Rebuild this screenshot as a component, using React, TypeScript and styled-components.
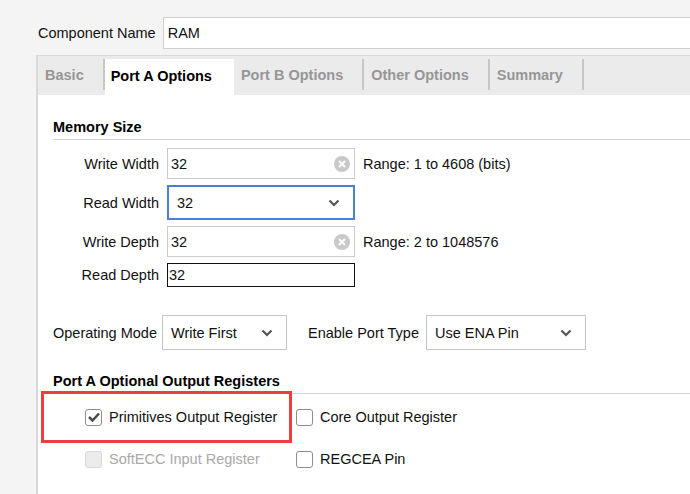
import React from "react";
import styled, { createGlobalStyle, css } from "styled-components";

const GlobalStyle = createGlobalStyle`
  html, body {
    margin: 0;
    padding: 0;
    height: 100%;
    overflow: hidden;
    background: #f4f4f4;
    font-family: "Liberation Sans", Arial, sans-serif;
    font-size: 14.5px;
    color: #111;
  }
  #root {
    height: 100%;
  }
`;

const StyledPage = styled.div`
  display: flex;
  flex-direction: column;
  height: 100%;
`;

const StyledNameRow = styled.div`
  display: flex;
  align-items: center;
  gap: 7px;
  padding: 17px 0 0 38px;
`;

const StyledNameInput = styled.div`
  flex: 1;
  height: 30px;
  line-height: 30px;
  padding-left: 4px;
  background: #fff;
  border: 1px solid #cfcfcf;
  border-right: none;
`;

const StyledPanel = styled.div`
  flex: 1;
  display: flex;
  flex-direction: column;
  margin: 6px 0 0 36px;
  border-left: 2px solid #d9d9d9;
  border-top: 1px solid #d9d9d9;
  background: #fff;
`;

const StyledTabBar = styled.div`
  display: flex;
  align-items: flex-start;
  padding-top: 3px;
  height: 36px;
  background: #ebebeb;
`;

const StyledTab = styled.div<{ $active?: boolean; $sep?: boolean }>`
  height: 31px;
  line-height: 33px;
  padding: 0 19px 0 7px;
  font-weight: bold;
  color: #969696;
  white-space: nowrap;

  ${({ $sep }) =>
    $sep &&
    css`
      border-right: 2px solid #c6c6c6;
    `}

  ${({ $active }) =>
    $active &&
    css`
      height: 36px;
      line-height: 35px;
      padding: 0 22px 0 6px;
      background: #fff;
      color: #000;
    `}
`;

const StyledContent = styled.div`
  padding: 24px 0 0 15px;
`;

const StyledSectionTitle = styled.div<{ $top?: number }>`
  margin-top: ${({ $top }) => $top ?? 0}px;
  padding-bottom: 3px;
  line-height: 17px;
  font-weight: bold;
  color: #000;
  border-bottom: 1px solid #d4d4d4;
`;

const StyledSizeGrid = styled.div`
  display: grid;
  grid-template-columns: 106px 188px auto;
  column-gap: 8px;
  row-gap: 6px;
  align-items: center;
  margin-top: 8px;
`;

const StyledLabel = styled.div`
  text-align: right;
  white-space: nowrap;
`;

const StyledField = styled.div<{ $variant?: "clear" | "focus" | "plain" }>`
  box-sizing: border-box;
  display: flex;
  align-items: center;
  justify-content: space-between;
  height: 31px;
  padding: 0 4px 0 3px;
  background: #fff;
  border: 1px solid #cccccc;

  ${({ $variant }) =>
    $variant === "focus" &&
    css`
      height: 35px;
      padding: 0 13px 0 8px;
      border: 2px solid #4b7fd5;
    `}

  ${({ $variant }) =>
    $variant === "plain" &&
    css`
      height: 24px;
      padding: 0 1px;
      border: 1px solid #111;
    `}
`;

const StyledRange = styled.div`
  white-space: nowrap;
`;

const StyledModeRow = styled.div`
  display: flex;
  align-items: center;
  margin-top: 28px;
`;

const StyledSelect = styled.div<{ $width: number; $gap: number }>`
  box-sizing: border-box;
  display: flex;
  align-items: center;
  justify-content: space-between;
  width: ${({ $width }) => $width}px;
  height: 35px;
  padding: 0 13px 0 8px;
  margin: 0 21px 0 ${({ $gap }) => $gap}px;
  background: #fff;
  border: 1px solid #c6c6c6;
  white-space: nowrap;
`;

const StyledModeLabel = styled.div`
  white-space: nowrap;
`;

const StyledCheckGrid = styled.div`
  position: relative;
  display: grid;
  grid-template-columns: 211px auto;
  grid-auto-rows: 42px;
  align-items: center;
  padding: 2px 0 0 32px;
`;

const StyledCheckItem = styled.div<{ $disabled?: boolean }>`
  display: flex;
  align-items: center;
  gap: 7px;
  white-space: nowrap;
  color: ${({ $disabled }) => ($disabled ? "#a9a9a9" : "#111")};
`;

const StyledBox = styled.span<{ $disabled?: boolean }>`
  box-sizing: border-box;
  display: flex;
  align-items: center;
  justify-content: center;
  width: 17px;
  height: 17px;
  border: 1.5px solid #8e8e8e;
  border-radius: 3px;
  background: #fff;

  ${({ $disabled }) =>
    $disabled &&
    css`
      border-color: #d8d8d8;
      background: #ececec;
    `}
`;

const StyledHighlight = styled.div`
  position: absolute;
  left: -12px;
  top: -3px;
  width: 245px;
  height: 46px;
  border: 3px solid #ef3c3c;
  pointer-events: none;
`;

const Chevron = () => (
  <svg width="12" height="8" viewBox="0 0 12 8">
    <polyline
      points="1.5,1.5 6,6 10.5,1.5"
      fill="none"
      stroke="#555"
      strokeWidth="2.2"
    />
  </svg>
);

const ClearIcon = () => (
  <svg width="16" height="16" viewBox="0 0 16 16">
    <circle cx="8" cy="8" r="8" fill="#c9c9c9" />
    <path d="M5 5 L11 11 M11 5 L5 11" stroke="#fff" strokeWidth="2" />
  </svg>
);

const Check = () => (
  <svg width="12" height="10" viewBox="0 0 12 10">
    <polyline
      points="1,5 4.5,8.5 11,1.5"
      fill="none"
      stroke="#4a4a4a"
      strokeWidth="2.5"
    />
  </svg>
);

const CheckOption = ({
  label,
  checked,
  disabled
}: {
  label: string;
  checked?: boolean;
  disabled?: boolean;
}) => (
  <StyledCheckItem $disabled={disabled}>
    <StyledBox $disabled={disabled}>{checked && <Check />}</StyledBox>
    {label}
  </StyledCheckItem>
);

const tabs = [
  { name: "Basic", sep: true },
  { name: "Port A Options", active: true },
  { name: "Port B Options", sep: true },
  { name: "Other Options", sep: true },
  { name: "Summary", sep: true }
];

const App = () => {
  return (
    <>
      <GlobalStyle />
      <StyledPage>
        <StyledNameRow>
          <span>Component Name</span>
          <StyledNameInput>RAM</StyledNameInput>
        </StyledNameRow>
        <StyledPanel>
          <StyledTabBar>
            {tabs.map((tab) => (
              <StyledTab key={tab.name} $active={tab.active} $sep={tab.sep}>
                {tab.name}
              </StyledTab>
            ))}
          </StyledTabBar>
          <StyledContent>
            <StyledSectionTitle>Memory Size</StyledSectionTitle>
            <StyledSizeGrid>
              <StyledLabel>Write Width</StyledLabel>
              <StyledField $variant="clear">
                32
                <ClearIcon />
              </StyledField>
              <StyledRange>Range: 1 to 4608 (bits)</StyledRange>

              <StyledLabel>Read Width</StyledLabel>
              <StyledField $variant="focus">
                32
                <Chevron />
              </StyledField>
              <span />

              <StyledLabel>Write Depth</StyledLabel>
              <StyledField $variant="clear">
                32
                <ClearIcon />
              </StyledField>
              <StyledRange>Range: 2 to 1048576</StyledRange>

              <StyledLabel>Read Depth</StyledLabel>
              <StyledField $variant="plain">32</StyledField>
              <span />
            </StyledSizeGrid>

            <StyledModeRow>
              <StyledModeLabel>Operating Mode</StyledModeLabel>
              <StyledSelect $width={125} $gap={5}>
                Write First
                <Chevron />
              </StyledSelect>
              <StyledModeLabel>Enable Port Type</StyledModeLabel>
              <StyledSelect $width={160} $gap={7}>
                Use ENA Pin
                <Chevron />
              </StyledSelect>
            </StyledModeRow>

            <StyledSectionTitle $top={23}>
              Port A Optional Output Registers
            </StyledSectionTitle>
            <StyledCheckGrid>
              <StyledHighlight />
              <CheckOption label="Primitives Output Register" checked />
              <CheckOption label="Core Output Register" />
              <CheckOption label="SoftECC Input Register" disabled />
              <CheckOption label="REGCEA Pin" />
            </StyledCheckGrid>
          </StyledContent>
        </StyledPanel>
      </StyledPage>
    </>
  );
};

export default App;
